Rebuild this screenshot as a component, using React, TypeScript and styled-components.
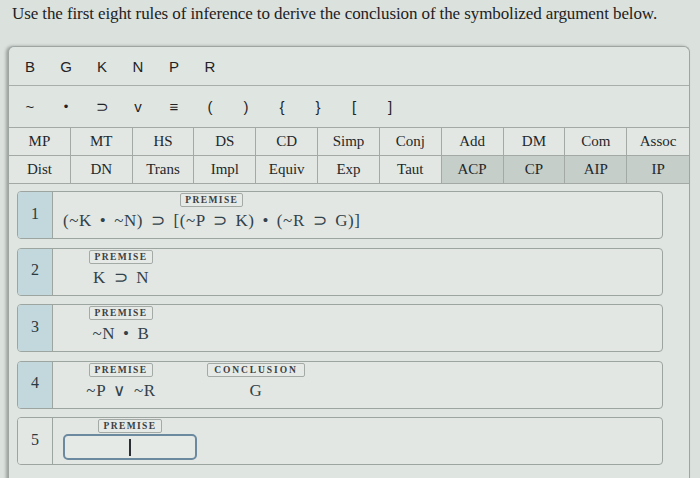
import styled, { createGlobalStyle } from 'styled-components'

const GlobalStyle = createGlobalStyle`
  html, body {
    margin: 0;
    padding: 0;
    overflow: hidden;
    background: #dbe1dd;
    font-family: "Liberation Serif", "Times New Roman", serif;
    color: #23282b;
  }
`

const variables = ['B', 'G', 'K', 'N', 'P', 'R']
const symbols = ['~', '•', '⊃', 'v', '≡', '(', ')', '{', '}', '[', ']']

const rules = [
  ['MP', 'MT', 'HS', 'DS', 'CD', 'Simp', 'Conj', 'Add', 'DM', 'Com', 'Assoc'],
  ['Dist', 'DN', 'Trans', 'Impl', 'Equiv', 'Exp', 'Taut', 'ACP', 'CP', 'AIP', 'IP'],
]
const shadedRules = ['ACP', 'CP', 'AIP', 'IP']

interface Entry {
  tag: string
  text?: string
  input?: boolean
}

interface ProofLine {
  n: number
  given: boolean
  entries: Entry[]
}

const lines: ProofLine[] = [
  { n: 1, given: true, entries: [{ tag: 'PREMISE', text: '(~K • ~N) ⊃ [(~P ⊃ K) • (~R ⊃ G)]' }] },
  { n: 2, given: true, entries: [{ tag: 'PREMISE', text: 'K ⊃ N' }] },
  { n: 3, given: true, entries: [{ tag: 'PREMISE', text: '~N • B' }] },
  {
    n: 4,
    given: true,
    entries: [
      { tag: 'PREMISE', text: '~P ∨ ~R' },
      { tag: 'CONCLUSION', text: 'G' },
    ],
  },
  { n: 5, given: false, entries: [{ tag: 'PREMISE', input: true }] },
]

const Title = styled.div`
  box-sizing: border-box;
  height: 46px;
  padding: 4px 0 0 12px;
  font-size: 17px;
  letter-spacing: -0.1px;
  line-height: 20px;
  color: #1d2124;
  white-space: nowrap;
`

const Panel = styled.div`
  box-sizing: border-box;
  margin: 0 10px 0 8px;
  height: 440px;
  background: #dfe5e1;
  border: 1px solid #9ea6a2;
  border-bottom: none;
  border-radius: 6px 6px 0 0;
  box-shadow: -2px 0 3px rgba(40, 50, 45, 0.35);
`

const KeyRow = styled.div<{ $tall?: boolean }>`
  display: flex;
  align-items: center;
  height: ${(p) => (p.$tall ? '41px' : '38px')};
  padding-left: 3px;
  border-bottom: ${(p) => (p.$tall ? 'none' : '1px solid #a8afab')};
  font-family: "Liberation Sans", Arial, sans-serif;
  font-size: 15px;
  color: #1f2326;
`

const Key = styled.span<{ $small?: boolean }>`
  width: 36px;
  text-align: center;
  font-size: ${(p) => (p.$small ? '13px' : '15px')};
`

const RuleGrid = styled.div`
  display: grid;
  grid-template-columns: repeat(11, 1fr);
  border-top: 1px solid #a3aaa6;
  border-bottom: 1px solid #a3aaa6;
`

const RuleCell = styled.div<{ $shaded: boolean; $last: boolean; $top: boolean }>`
  height: 27px;
  line-height: 27px;
  text-align: center;
  font-size: 15px;
  color: #23282b;
  background: ${(p) => (p.$shaded ? '#c6cec9' : '#e2e7e4')};
  border-right: ${(p) => (p.$last ? 'none' : '1px solid #a3aaa6')};
  border-bottom: ${(p) => (p.$top ? '1px solid #a3aaa6' : 'none')};
`

const Proof = styled.div`
  display: flex;
  flex-direction: column;
  gap: 8.5px;
  padding: 7px 0 0 8px;
`

const LineBox = styled.div`
  display: flex;
  width: 646px;
  height: 48px;
  box-sizing: border-box;
  border: 1px solid #9da5a1;
  border-radius: 4px;
  background: #e2e7e4;
  overflow: hidden;
`

const LineNumber = styled.div<{ $given: boolean }>`
  width: 35px;
  flex-shrink: 0;
  display: flex;
  align-items: center;
  justify-content: center;
  padding-bottom: 3px;
  box-sizing: border-box;
  font-size: 16px;
  color: #2b3a41;
  background: ${(p) => (p.$given ? '#c3d8dc' : '#e2e7e4')};
  border-right: 1px solid #9da5a1;
`

const Entries = styled.div`
  display: flex;
  gap: 19px;
  padding-left: 10px;
`

const EntryCol = styled.div`
  display: flex;
  flex-direction: column;
  align-items: center;
  min-width: 116px;
`

const Tag = styled.span<{ $wide?: boolean }>`
  margin-top: 1px;
  padding: 0 ${(p) => (p.$wide ? '6px' : '4px')};
  height: 12px;
  line-height: 12px;
  font-size: 9.5px;
  font-weight: bold;
  letter-spacing: ${(p) => (p.$wide ? '1.9px' : '1.4px')};
  color: #3a4043;
  background: #e6eae7;
  border: 1px solid #a4aba7;
  border-radius: 2px;
`

const Formula = styled.div`
  margin-top: 3px;
  line-height: 22px;
  font-size: 17px;
  letter-spacing: 0.6px;
  word-spacing: 3px;
  color: #32424a;
  white-space: pre;
`

const InputBox = styled.div`
  display: flex;
  align-items: center;
  justify-content: center;
  margin-top: 1px;
  width: 134px;
  height: 26px;
  box-sizing: border-box;
  border: 2px solid #6b8aa0;
  border-radius: 5px;
  background: #e5eae7;
`

const Caret = styled.span`
  width: 2px;
  height: 17px;
  background: #2a2f33;
`

export default function App() {
  return (
    <>
      <GlobalStyle />
      <Title>Use the first eight rules of inference to derive the conclusion of the symbolized argument below.</Title>
      <Panel>
        <KeyRow>
          {variables.map((v) => (
            <Key key={v}>{v}</Key>
          ))}
        </KeyRow>
        <KeyRow $tall>
          {symbols.map((s) => (
            <Key key={s} $small={s === '•'}>{s}</Key>
          ))}
        </KeyRow>
        <RuleGrid>
          {rules.map((row, r) =>
            row.map((rule, i) => (
              <RuleCell key={rule} $shaded={shadedRules.includes(rule)} $last={i === row.length - 1} $top={r === 0}>
                {rule}
              </RuleCell>
            ))
          )}
        </RuleGrid>
        <Proof>
          {lines.map((line) => (
            <LineBox key={line.n}>
              <LineNumber $given={line.given}>{line.n}</LineNumber>
              <Entries>
                {line.entries.map((e) => (
                  <EntryCol key={e.tag}>
                    <Tag $wide={e.tag === 'CONCLUSION'}>{e.tag}</Tag>
                    {e.input ? (
                      <InputBox>
                        <Caret />
                      </InputBox>
                    ) : (
                      <Formula>{e.text}</Formula>
                    )}
                  </EntryCol>
                ))}
              </Entries>
            </LineBox>
          ))}
        </Proof>
      </Panel>
    </>
  )
}
